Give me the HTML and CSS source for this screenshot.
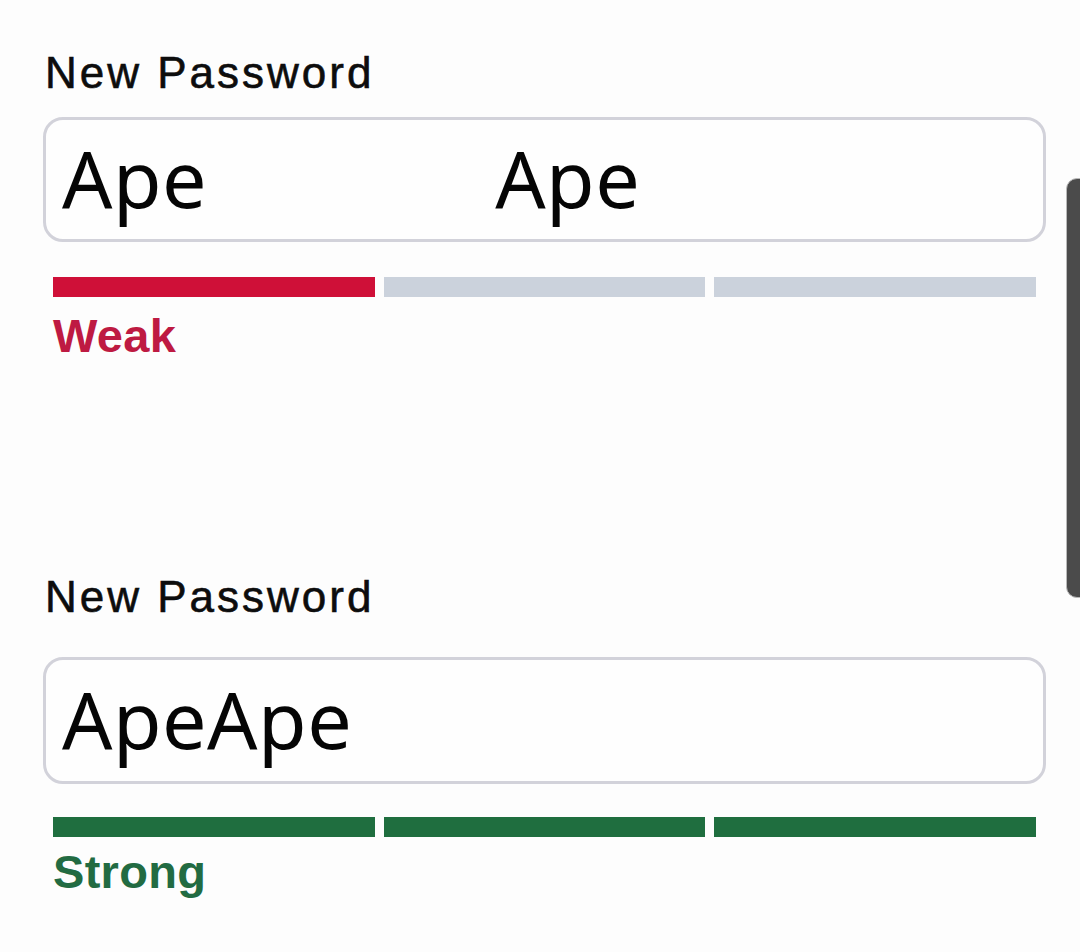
FILE: index.html
```html
<!DOCTYPE html>
<html lang="en">
<head>
<meta charset="utf-8">
<title>New Password</title>
<link rel="stylesheet" href="styles.css">
</head>
<body>
<main class="page">
  <section class="field field-weak">
    <label class="label">New Password</label>
    <div class="input"><span>Ape</span><span class="second">Ape</span></div>
    <div class="meter">
      <span class="seg seg-red"></span>
      <span class="seg seg-grey"></span>
      <span class="seg seg-grey"></span>
    </div>
    <div class="strength strength-weak">Weak</div>
  </section>
  <section class="field field-strong">
    <label class="label">New Password</label>
    <div class="input"><span>ApeApe</span></div>
    <div class="meter">
      <span class="seg seg-green"></span>
      <span class="seg seg-green"></span>
      <span class="seg seg-green"></span>
    </div>
    <div class="strength strength-strong">Strong</div>
  </section>
</main>
<div class="scrollbar"></div>
</body>
</html>
```

FILE: styles.css
```css
html {
  overflow: hidden;
  background: #fdfdfd;
}
body {
  margin: 0;
  padding: 0;
  background: #fdfdfd;
  min-height: 952px;
}
.page {
  width: 1003px;
  padding-left: 43px;
  display: flex;
  flex-direction: column;
}
.field {
  display: flex;
  flex-direction: column;
}
.field-weak { margin-top: 51px; }
.field-strong { margin-top: 216px; }
.label {
  font-family: "Liberation Sans", Arial, sans-serif;
  font-size: 44px;
  line-height: 44px;
  letter-spacing: 3px;
  color: #0d0d0d;
  margin-left: 2px;
  -webkit-text-stroke: 0.6px #0d0d0d;
}
.input {
  box-sizing: border-box;
  display: flex;
  align-items: center;
  border: 3px solid #d2d2da;
  border-radius: 20px;
  padding: 0 16px 4px;
  background: #fefefe;
  font-family: "Noto Sans", "Open Sans", sans-serif;
  font-size: 79px;
  line-height: 79px;
  letter-spacing: 0.5px;
  color: #050505;
  white-space: pre;
}
.field-weak .input { margin-top: 22px; height: 125px; }
.field-strong .input { margin-top: 38px; height: 127px; }
.second { margin-left: 288px; }
.meter {
  display: flex;
  gap: 9px;
  padding: 0 10px;
  height: 20px;
}
.field-weak .meter { margin-top: 35px; }
.field-strong .meter { margin-top: 33px; }
.seg { flex: 1; }
.seg-red { background: #cf1038; }
.seg-grey { background: #cbd2dc; }
.seg-green { background: #1f6e3f; }
.strength {
  font-family: "Liberation Sans", Arial, sans-serif;
  font-weight: bold;
  font-size: 47px;
  line-height: 47px;
  letter-spacing: 0.3px;
  padding-left: 10px;
}
.strength-weak { color: #be1a42; margin-top: 15px; }
.strength-strong { color: #226b42; margin-top: 11px; }
.scrollbar {
  position: absolute;
  left: 1066px;
  top: 178px;
  width: 30px;
  height: 420px;
  box-sizing: border-box;
  background: #4b4b4b;
  border: 1px solid #b9b9b9;
  border-radius: 11px;
}
```
